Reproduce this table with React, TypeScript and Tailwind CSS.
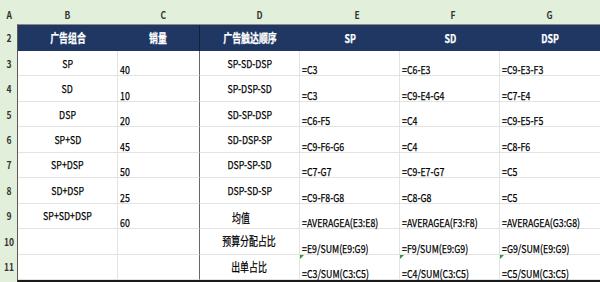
const letters = ["A", "B", "C", "D", "E", "F", "G"];

const rows = [
  ["3", "SP", "40", "SP-SD-DSP", "=C3", "=C6-E3", "=C9-E3-F3"],
  ["4", "SD", "10", "SP-DSP-SD", "=C3", "=C9-E4-G4", "=C7-E4"],
  ["5", "DSP", "20", "SD-SP-DSP", "=C6-F5", "=C4", "=C9-E5-F5"],
  ["6", "SP+SD", "45", "SD-DSP-SP", "=C9-F6-G6", "=C4", "=C8-F6"],
  ["7", "SP+DSP", "50", "DSP-SP-SD", "=C7-G7", "=C9-E7-G7", "=C5"],
  ["8", "SD+DSP", "25", "DSP-SD-SP", "=C9-F8-G8", "=C8-G8", "=C5"],
  ["9", "SP+SD+DSP", "60", "均值", "=AVERAGEA(E3:E8)", "=AVERAGEA(F3:F8)", "=AVERAGEA(G3:G8)"],
  ["10", "", "", "预算分配占比", "=E9/SUM(E9:G9)", "=F9/SUM(E9:G9)", "=G9/SUM(E9:G9)"],
  ["11", "", "", "出单占比", "=C3/SUM(C3:C5)", "=C4/SUM(C3:C5)", "=C5/SUM(C3:C5)"],
];

const isCjk = (s: string) => /[\u4e00-\u9fff]/.test(s);

function Squeeze({ text, left, small }: { text: string; left?: boolean; small?: boolean }) {
  const size = small
    ? "text-[10px] scale-x-[0.85]"
    : isCjk(text)
      ? "text-[12px] scale-x-[0.74]"
      : "text-[11px] scale-x-[0.8]";
  return (
    <span
      className={`inline-block whitespace-nowrap leading-none ${left ? "origin-left" : "origin-center"} ${size}`}
    >
      {text}
    </span>
  );
}

function FormulaCell({ text, flag, last }: { text: string; flag?: boolean; last?: boolean }) {
  return (
    <div
      className={`relative flex items-end border-b border-[#e3e3e3] pl-[2px] ${last ? "" : "border-r"}`}
    >
      {flag && (
        <span className="absolute left-0 top-0 h-0 w-0 border-r-[4px] border-t-[4px] border-r-transparent border-t-[#2a9a3c]" />
      )}
      <Squeeze text={text} left />
    </div>
  );
}

export default function App() {
  return (
    <div className="flex h-[282px] w-[600px] flex-col overflow-hidden bg-[#e2efda] font-['Noto_Sans_CJK_SC','Liberation_Sans',sans-serif] text-black">
      {/* column letters */}
      <div className="grid h-[24px] shrink-0 grid-cols-[18px_98px_94px_100px_94px_98px_96px] items-center font-bold text-[#333]">
        {letters.map((l) => (
          <div key={l} className="text-center leading-none">
            <Squeeze text={l} small />
          </div>
        ))}
      </div>

      <div className="flex min-h-0 flex-1">
        {/* row numbers */}
        <div className="flex w-[17px] shrink-0 flex-col pb-[2px] pt-[1px] font-bold text-[#333]">
          <div className="flex h-[26px] items-center justify-center">
            <Squeeze text="2" small />
          </div>
          <div className="grid flex-1 grid-rows-9">
            {rows.map((r) => (
              <div key={r[0]} className="flex items-center justify-center">
                <Squeeze text={r[0]} small />
              </div>
            ))}
          </div>
        </div>

        {/* sheet */}
        <div className="flex flex-1 flex-col border-b-2 border-l border-t border-b-[#1a1a1a] border-l-[#5a5a5a] border-t-[#8a8a8a] bg-white [-webkit-text-stroke:0.25px]">
          <div className="grid h-[26px] shrink-0 grid-cols-[100px_82px_100px_100px_100px_100px] bg-[#203764] font-bold text-white">
            <div className="flex items-center justify-center">
              <Squeeze text="广告组合" />
            </div>
            <div className="flex items-center justify-center border-r border-[#141f38]">
              <Squeeze text="销量" />
            </div>
            <div className="flex items-center justify-center">
              <Squeeze text="广告触达顺序" />
            </div>
            <div className="flex items-center justify-center">
              <Squeeze text="SP" />
            </div>
            <div className="flex items-center justify-center">
              <Squeeze text="SD" />
            </div>
            <div className="flex items-center justify-center">
              <Squeeze text="DSP" />
            </div>
          </div>

          <div className="grid flex-1 grid-cols-[100px_82px_100px_100px_100px_100px] grid-rows-9">
            {rows.map((r) => (
              <div key={r[0]} className="contents">
                <div className="flex items-center justify-center border-b border-r border-[#e3e3e3]">
                  <Squeeze text={r[1]} />
                </div>
                <div className="flex items-end border-b border-r border-[#e3e3e3] border-r-[#666] pl-[2px]">
                  <Squeeze text={r[2]} left />
                </div>
                <div className="flex items-center justify-center border-b border-r border-[#e3e3e3]">
                  {r[3] === "均值" ? (
                    <span className="mr-[16px]">
                      <Squeeze text={r[3]} />
                    </span>
                  ) : (
                    <Squeeze text={r[3]} />
                  )}
                </div>
                <FormulaCell text={r[4]} flag={r[0] === "11"} />
                <FormulaCell text={r[5]} flag={r[0] === "11"} />
                <FormulaCell text={r[6]} flag={r[0] === "11"} last />
              </div>
            ))}
          </div>
        </div>
      </div>
    </div>
  );
}
